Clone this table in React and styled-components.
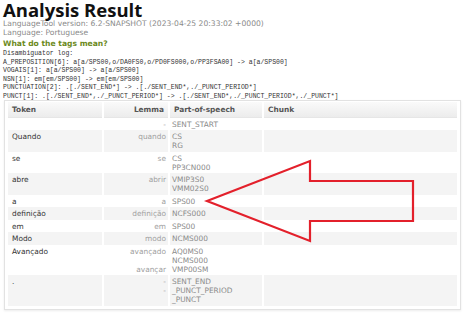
import React from "react";
import styled, { createGlobalStyle } from "styled-components";

const GlobalStyle = createGlobalStyle`
  html, body {
    margin: 0;
    padding: 0;
    background: #fff;
  }
  body {
    font-family: "DejaVu Sans", Verdana, sans-serif;
    width: 474px;
    height: 315px;
    overflow: hidden;
  }
`;

const rows = [
  { token: "", lemma: ["-"], pos: ["SENT_START"] },
  { token: "Quando", lemma: ["quando"], pos: ["CS", "RG"] },
  { token: "se", lemma: ["se"], pos: ["CS", "PP3CN000"] },
  { token: "abre", lemma: ["abrir"], pos: ["VMIP3S0", "VMM02S0"] },
  { token: "a", lemma: ["a"], pos: ["SPS00"] },
  { token: "definição", lemma: ["definição"], pos: ["NCFS000"] },
  { token: "em", lemma: ["em"], pos: ["SPS00"] },
  { token: "Modo", lemma: ["modo"], pos: ["NCMS000"] },
  { token: "Avançado", lemma: ["avançado", "", "avançar"], pos: ["AQ0MS0", "NCMS000", "VMP00SM"] },
  { token: ".", lemma: ["-", "-"], pos: ["SENT_END", "_PUNCT_PERIOD", "_PUNCT"] }
];

const logLines = [
  "Disambiguator log:",
  "A_PREPOSITION[6]: a[a/SPS00,o/DA0FS0,o/PD0FS000,o/PP3FSA00] -> a[a/SPS00]",
  "VOGAIS[1]: a[a/SPS00] -> a[a/SPS00]",
  "NSN[1]: em[em/SPS00] -> em[em/SPS00]",
  "PUNCTUATION[2]: .[./SENT_END*] -> .[./SENT_END*,./_PUNCT_PERIOD*]",
  "PUNCT[1]: .[./SENT_END*,./_PUNCT_PERIOD*] -> .[./SENT_END*,./_PUNCT_PERIOD*,./_PUNCT*]"
];

const App = () => {
  return (
    <>
      <GlobalStyle />
      <Page>
        <Title>Analysis Result</Title>
        <Meta>LanguageTool version: 6.2-SNAPSHOT (2023-04-25 20:33:02 +0000)</Meta>
        <Meta>Language: Portuguese</Meta>
        <TagsLink>What do the tags mean?</TagsLink>
        <Log>{logLines.join("\n")}</Log>
        <TableBox>
          <Table>
            <thead>
              <tr>
                <Th>Token</Th>
                <Th $right>Lemma</Th>
                <Th>Part-of-speech</Th>
                <Th>Chunk</Th>
              </tr>
            </thead>
            <tbody>
              {rows.map((r, i) => (
                <Row key={i} $odd={i % 2 === 1}>
                  <TokenCell>{r.token}</TokenCell>
                  <LemmaCell>
                    {r.lemma.map((l, j) => (
                      <Line key={j}>{l || "\u00a0"}</Line>
                    ))}
                  </LemmaCell>
                  <PosCell>
                    {r.pos.map((p, j) => (
                      <Line key={j}>{p}</Line>
                    ))}
                  </PosCell>
                  <ChunkCell />
                </Row>
              ))}
            </tbody>
          </Table>
        </TableBox>
        <Arrow viewBox="0 0 474 315" width="474" height="315">
          <polygon
            points="207,201 310,161 310,181 413,181 413,221 310,221 310,241"
            fill="none"
            stroke="#e3202b"
            strokeWidth="2.2"
            strokeLinejoin="miter"
          />
        </Arrow>
      </Page>
    </>
  );
};

export default App;

const Page = styled.div`
    position: relative;
    padding: 0 3px;
    height: 315px;
  `,
  Title = styled.h1`
    margin: 0;
    font-family: "Open Sans", "DejaVu Sans", sans-serif;
    font-weight: 700;
    font-size: 18.5px;
    line-height: 19px;
    height: 19px;
    color: #111;
  `,
  Meta = styled.div`
    font-size: 7.6px;
    line-height: 9px;
    color: #8a8a8a;
  `,
  TagsLink = styled.div`
    margin-top: 2px;
    font-size: 7.6px;
    line-height: 10px;
    font-weight: 700;
    color: #6c8a1c;
  `,
  Log = styled.pre`
    margin: 1px 0 0;
    font-family: "Liberation Mono", "DejaVu Sans Mono", monospace;
    font-size: 6.5px;
    line-height: 8.6px;
    color: #333;
    white-space: pre;
  `,
  TableBox = styled.div`
    margin: -2px 10px 0 1px;
    border: 1px solid #e2e2e2;
    box-shadow: 0 1px 2px rgba(0, 0, 0, 0.08);
    padding: 1px 1px 3px;
  `,
  Table = styled.table`
    width: 100%;
    border-collapse: separate;
    border-spacing: 2px 0;
    font-size: 7.4px;
    line-height: 9px;
    td, th {
      vertical-align: top;
    }
  `,
  Th = styled.th`
    text-align: ${(p) => (p.$right ? "right" : "left")};
    font-weight: 700;
    color: #555;
    padding: 3px 4px 3px;
    height: 9px;
    background: linear-gradient(#fafafa, #ececec);
    border-bottom: 1px solid #e6e6e6;
  `,
  Row = styled.tr`
    background: ${(p) => (p.$odd ? "#f4f4f4" : "#fff")};
  `,
  TokenCell = styled.td`
    width: 86px;
    padding: 2px 4px 1.5px;
    color: #333;
  `,
  LemmaCell = styled.td`
    width: 58px;
    padding: 2px 2px 1.5px 4px;
    text-align: right;
    color: #a0a0a0;
  `,
  PosCell = styled.td`
    width: 86px;
    padding: 2px 4px 1.5px 2px;
    color: #8a8a8a;
  `,
  ChunkCell = styled.td`
    padding: 2px 4px 1.5px;
  `,
  Line = styled.div`
    white-space: nowrap;
  `,
  Arrow = styled.svg`
    position: absolute;
    left: 0;
    top: 0;
    pointer-events: none;
  `;
